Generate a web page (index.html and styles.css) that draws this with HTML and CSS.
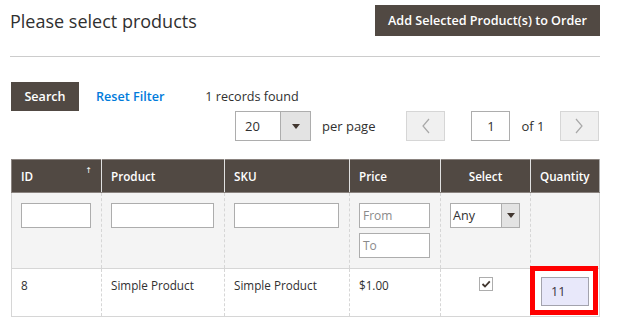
FILE: index.html
```html
<!DOCTYPE html>
<html>
<head>
<meta charset="utf-8">
<link rel="stylesheet" href="styles.css">
</head>
<body>
<div class="page">
  <div class="head">
    <h1 class="title">Please select products</h1>
    <button class="btn btn-primary">Add Selected Product(s) to Order</button>
  </div>
  <div class="rule"></div>
  <div class="actions">
    <button class="btn btn-search">Search</button>
    <a class="reset" href="#">Reset Filter</a>
    <span class="found">1 records found</span>
  </div>
  <div class="pager">
    <div class="perpage">
      <span class="perpage-val">20</span>
      <span class="perpage-arrow"><span class="tri"></span></span>
    </div>
    <span class="perpage-label">per page</span>
    <span class="nav nav-prev"><svg width="10" height="16" viewBox="0 0 10 16"><path d="M8 1 L2 8 L8 15" fill="none" stroke="#a8a8a8" stroke-width="1.2"/></svg></span>
    <span class="pageinput">1</span>
    <span class="of">of 1</span>
    <span class="nav nav-next"><svg width="10" height="16" viewBox="0 0 10 16"><path d="M2 1 L8 8 L2 15" fill="none" stroke="#a8a8a8" stroke-width="1.2"/></svg></span>
  </div>
  <table class="grid">
    <colgroup>
      <col class="c-id"><col class="c-prod"><col class="c-sku"><col class="c-price"><col class="c-sel"><col class="c-qty">
    </colgroup>
    <thead>
      <tr>
        <th class="sortable">ID<span class="sort">↑</span></th>
        <th>Product</th>
        <th>SKU</th>
        <th>Price</th>
        <th class="center">Select</th>
        <th>Quantity</th>
      </tr>
    </thead>
    <tbody>
      <tr class="filters">
        <td><div class="field"></div></td>
        <td><div class="field"></div></td>
        <td><div class="field"></div></td>
        <td>
          <div class="field ph">From</div>
          <div class="field ph gap">To</div>
        </td>
        <td><div class="field sel"><span class="sel-val">Any</span><span class="sel-arrow"><span class="tri"></span></span></div></td>
        <td></td>
      </tr>
      <tr class="data">
        <td>8</td>
        <td>Simple Product</td>
        <td>Simple Product</td>
        <td>$1.00</td>
        <td class="center chk-cell"><span class="chk"><svg width="12" height="12" viewBox="0 0 12 12"><path d="M2.5 6 L5 8.5 L9.8 3.4" fill="none" stroke="#41362f" stroke-width="1.8"/></svg></span></td>
        <td class="qty-cell"><div class="qty">11</div></td>
      </tr>
    </tbody>
  </table>
</div>
</body>
</html>
```
FILE: styles.css
```css
* { box-sizing: border-box; }
body {
  margin: 0;
  font-family: "Open Sans", "DejaVu Sans", sans-serif;
  color: #303030;
  font-size: 12.6px;
  background: #fff;
}
.page {
  width: 600px;
  padding: 0 0 0 10px;
}
.head {
  display: flex;
  align-items: center;
  justify-content: space-between;
  padding-top: 5px;
}
.title {
  margin: 0;
  font-size: 18px;
  font-weight: 400;
  color: #303030;
  line-height: 24px;
}
.btn {
  font-family: "Open Sans", "DejaVu Sans", sans-serif;
  border: 0;
  color: #fff;
  background: #514943;
  font-weight: 600;
  font-size: 12.6px;
  padding: 0;
}
.btn-primary {
  width: 225px;
  height: 31px;
}
.rule {
  height: 1px;
  background: #cccccc;
  margin-top: 20px;
}
.actions {
  display: flex;
  align-items: center;
  margin-top: 25px;
  padding-left: 1px;
  height: 29px;
}
.btn-search {
  width: 68px;
  height: 29px;
}
.reset {
  margin-left: 17px;
  color: #007bdb;
  font-weight: 600;
  text-decoration: none;
}
.found {
  margin-left: 41px;
}
.pager {
  display: flex;
  align-items: center;
  margin-left: 225px;
  height: 30px;
}
.perpage {
  display: flex;
  width: 76px;
  height: 30px;
  border: 1px solid #adadad;
}
.perpage-val {
  flex: 1;
  padding-left: 9px;
  line-height: 28px;
  font-size: 13px;
}
.perpage-arrow {
  width: 30px;
  background: #e3e3e3;
  border-left: 1px solid #adadad;
  display: flex;
  align-items: center;
  justify-content: center;
}
.tri {
  width: 0;
  height: 0;
  border-left: 4px solid transparent;
  border-right: 4px solid transparent;
  border-top: 5px solid #41362f;
}
.perpage-label {
  margin-left: 11px;
  font-size: 13px;
}
.nav {
  width: 39px;
  height: 30px;
  background: #f0f0f0;
  border: 1px solid #d6d6d6;
  display: flex;
  align-items: center;
  justify-content: center;
}
.nav-prev { margin-left: 31px; }
.nav-next { margin-left: 15px; }
.pageinput {
  margin-left: 26px;
  width: 39px;
  height: 30px;
  border: 1px solid #adadad;
  text-align: center;
  line-height: 28px;
  font-size: 13px;
}
.of {
  margin-left: 11px;
  font-size: 13px;
}
.grid {
  margin-top: 18px;
  margin-left: 1px;
  width: 588px;
  border-collapse: collapse;
  table-layout: fixed;
  font-size: 11.7px;
}
.c-id { width: 90px; }
.c-prod { width: 123px; }
.c-sku { width: 125px; }
.c-price { width: 91px; }
.c-sel { width: 90px; }
.c-qty { width: 69px; }
.grid th {
  background: #514943;
  color: #fff;
  font-weight: 600;
  text-align: left;
  padding: 7px 9px;
  line-height: 18px;
  border-top: 1px solid #8a837f;
  border-bottom: 1px solid #8a837f;
  border-left: 1px solid #e0e0e0;
  border-right: 1px solid #e0e0e0;
}
.grid th:first-child { border-left-color: #8a837f; }
.grid th:last-child { border-right-color: #adadad; }
.grid th.center, .grid td.center { text-align: center; }
.sortable { position: relative; }
.sort {
  position: absolute;
  right: 9px;
  top: 6px;
  font-size: 8px;
  line-height: 8px;
  font-weight: 400;
}
.filters td {
  background: #f4f4f4;
  padding: 10px 10px 10px 9px;
  vertical-align: top;
  border-left: 1px dashed #d6d6d6;
  border-right: 1px dashed #d6d6d6;
}
.filters td:first-child { border-left: 1px solid #d6d6d6; }
.filters td:last-child { border-right: 1px solid #d6d6d6; }
.field {
  height: 25px;
  background: #fff;
  border: 1px solid #adadad;
  padding-left: 3px;
  line-height: 23px;
  font-size: 12px;
}
.ph { color: #8a8a8a; }
.gap { margin-top: 5px; }
.sel {
  display: flex;
  padding-left: 2px;
  color: #303030;
  font-size: 12.6px;
}
.sel-val { flex: 1; }
.sel-arrow {
  width: 18px;
  background: #e3e3e3;
  border-left: 1px solid #adadad;
  display: flex;
  align-items: center;
  justify-content: center;
}
.data td {
  background: #fff;
  padding: 7px 9px 0;
  line-height: 18px;
  vertical-align: top;
  border-left: 1px dashed #d6d6d6;
  border-right: 1px dashed #d6d6d6;
  border-bottom: 1px solid #d6d6d6;
  border-top: 1px solid #d6d6d6;
}
.data td:first-child { border-left: 1px solid #d6d6d6; }
.data td:last-child { border-right: 1px solid #d6d6d6; }
.data td.chk-cell { padding-top: 8px; }
.chk {
  display: inline-flex;
  width: 14px;
  height: 14px;
  border: 1px solid #adadad;
  background: #fff;
  align-items: center;
  justify-content: center;
  vertical-align: top;
}
.data td.qty-cell {
  position: relative;
  padding: 8px 10px 10px 10px;
}
.qty-cell::after {
  content: "";
  position: absolute;
  top: -3px;
  left: -1px;
  right: 1px;
  bottom: 1px;
  border: 5px solid #ff0000;
}
.qty {
  width: 48px;
  height: 29px;
  background: #e8e8fa;
  border: 1px solid #a3a3ad;
  padding-left: 9px;
  line-height: 27px;
  font-size: 12.6px;
  color: #3a3040;
}
```
